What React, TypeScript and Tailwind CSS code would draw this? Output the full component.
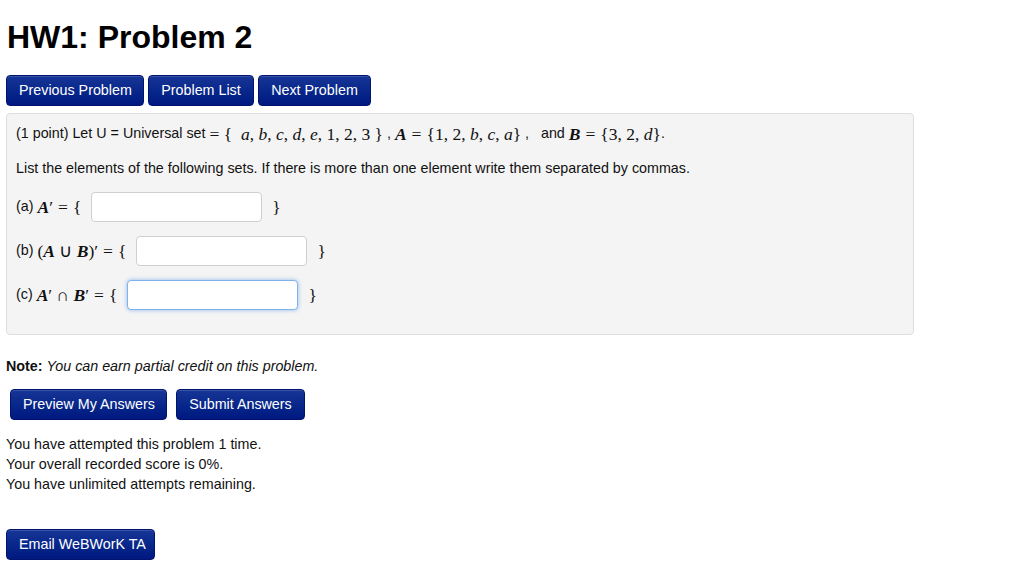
import React from 'react'

const btn =
  'rounded-[4px] border border-[#00136e] bg-gradient-to-b from-[#163596] to-[#001880] text-white text-[14.3px] leading-none h-[31px] px-[12px] whitespace-nowrap shadow-[inset_0_1px_0_rgba(255,255,255,0.15)]'

const I = ({ children }: { children: React.ReactNode }) => <i className="italic">{children}</i>
const IB = ({ children }: { children: React.ReactNode }) => <i className="italic font-bold">{children}</i>
const Eq = () => <span className="mx-[5px]">=</span>

const Math = ({ children }: { children: React.ReactNode }) => (
  <span className="font-['Liberation_Serif',serif] text-[17.5px]">{children}</span>
)

function Answer({ label, children, focused }: { label: string; children: React.ReactNode; focused?: boolean }) {
  return (
    <div className="flex items-center h-[30px]">
      <span>{label}</span>
      <span className="ml-[4px]">
        <Math>{children}</Math>
      </span>
      <input
        className={`ml-[10px] w-[171px] h-[30px] rounded-[4px] bg-white outline-none ${
          focused
            ? 'border border-[#7fb2ec] shadow-[0_0_4px_rgba(82,148,230,0.6)]'
            : 'border border-[#cfcfcf]'
        }`}
      />
      <span className="ml-[10px]">
        <Math>{'}'}</Math>
      </span>
    </div>
  )
}

export default function App() {
  return (
    <div className="font-['Liberation_Sans',Arial,sans-serif] text-[14.3px] text-[#111] bg-white w-[1024px] h-[572px] px-[6px]">
      <h1 className="pt-[19px] text-[32px] font-bold leading-[36px] pl-[1px] text-black">HW1: Problem 2</h1>

      <div className="flex gap-[4px] mt-[20px]">
        <button className={`${btn} w-[138px]`}>Previous Problem</button>
        <button className={`${btn} w-[106px]`}>Problem List</button>
        <button className={`${btn} w-[113px]`}>Next Problem</button>
      </div>

      <div className="mt-[7px] w-[908px] h-[222px] bg-[#f4f4f4] border border-[#dedede] rounded-[4px] px-[9px] pt-[8px]">
        <p className="flex items-center h-[24px] whitespace-pre">
          <span>(1 point) Let U = Universal set </span>
          <Math>
            {'= {  '}
            <I>a</I>, <I>b</I>, <I>c</I>, <I>d</I>, <I>e</I>, 1, 2, 3 {'}'}
          </Math>
          <span> , </span>
          <Math>
            <IB>A</IB>
            <Eq />
            {'{'}1, 2, <I>b</I>, <I>c</I>, <I>a</I>
            {'}'}
          </Math>
          <span> ,   and </span>
          <Math>
            <IB>B</IB>
            <Eq />
            {'{'}3, 2, <I>d</I>
            {'}'}
          </Math>
          <span>.</span>
        </p>

        <p className="mt-[12px] h-[20px] leading-[20px]">
          List the elements of the following sets. If there is more than one element write them separated by commas.
        </p>

        <div className="mt-[14px] flex flex-col gap-[14px]">
          <Answer label="(a)">
            <IB>A</IB>′<Eq />
            {'{'}
          </Answer>
          <Answer label="(b)">
            (<IB>A</IB> ∪ <IB>B</IB>)′<Eq />
            {'{'}
          </Answer>
          <Answer label="(c)" focused>
            <IB>A</IB>′ ∩ <IB>B</IB>′<Eq />
            {'{'}
          </Answer>
        </div>
      </div>

      <p className="mt-[21px] leading-[20px]">
        <b>Note:</b> <i>You can earn partial credit on this problem.</i>
      </p>

      <div className="flex gap-[9px] mt-[13px] pl-[4px]">
        <button className={`${btn} w-[157px] h-[30px]`}>Preview My Answers</button>
        <button className={`${btn} w-[129px] h-[30px]`}>Submit Answers</button>
      </div>

      <div className="mt-[14px] leading-[20px]">
        <p>You have attempted this problem 1 time.</p>
        <p>Your overall recorded score is 0%.</p>
        <p>You have unlimited attempts remaining.</p>
      </div>

      <button className={`${btn} w-[149px] h-[30px] mt-[35px]`}>Email WeBWorK TA</button>
    </div>
  )
}
